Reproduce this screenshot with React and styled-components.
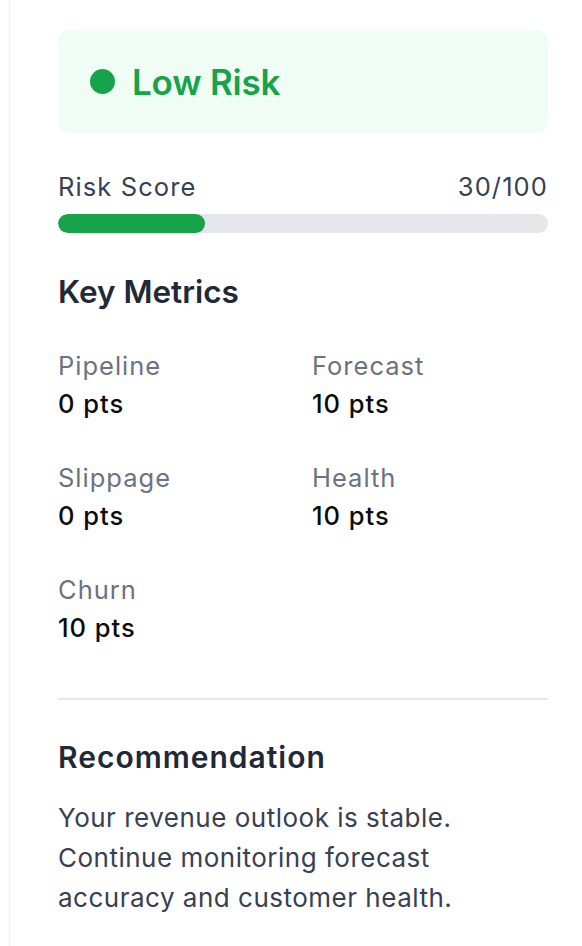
import React from 'react';
import styled, { createGlobalStyle } from 'styled-components';

const GlobalStyle = createGlobalStyle`
  html, body {
    margin: 0;
    padding: 0;
    background: #ffffff;
  }
  body {
    font-family: Inter, "Noto Sans", "Liberation Sans", sans-serif;
    -webkit-font-smoothing: antialiased;
  }
`;

const Panel = styled.aside`
  margin-left: 9px;
  min-height: 946px;
  box-sizing: border-box;
  border-left: 1px solid #f1f2f4;
  padding: 30px 34px 0 48px;
  display: flex;
  flex-direction: column;
`;

const Badge = styled.div`
  height: 103px;
  box-sizing: border-box;
  padding: 0 32px;
  display: flex;
  align-items: center;
  gap: 17px;
  background: #f0fdf4;
  border-radius: 12px;
`;

const Dot = styled.span`
  width: 25px;
  height: 25px;
  border-radius: 50%;
  background: ${({ color }) => color};
  flex-shrink: 0;
`;

const BadgeLabel = styled.span`
  font-size: 35px;
  line-height: 40px;
  font-weight: 600;
  color: ${({ color }) => color};
  letter-spacing: -0.2px;
`;

const ScoreRow = styled.div`
  margin-top: 36px;
  display: flex;
  justify-content: space-between;
  font-size: 25.5px;
  line-height: 35px;
  letter-spacing: 1.1px;
  color: #374151;
`;

const Track = styled.div`
  margin-top: 10px;
  height: 19px;
  border-radius: 10px;
  background: #e5e7eb;
  overflow: hidden;
`;

const Fill = styled.div`
  height: 100%;
  border-radius: 10px;
  background: #16a34a;
`;

const SectionTitle = styled.h3`
  margin: ${({ top }) => top}px 0 0;
  font-size: ${({ size }) => size}px;
  line-height: ${({ lh }) => lh}px;
  letter-spacing: ${({ track }) => track || 0}px;
  font-weight: 600;
  color: #1f2937;
`;

const MetricGrid = styled.div`
  margin-top: 34px;
  display: grid;
  grid-template-columns: 1fr 1fr;
  column-gap: 18px;
  row-gap: 39px;
`;

const Metric = styled.div`
  display: flex;
  flex-direction: column;
  gap: 3px;
`;

const MetricLabel = styled.span`
  font-size: 25.5px;
  line-height: 35px;
  letter-spacing: 1px;
  color: #6b7280;
`;

const MetricValue = styled.span`
  font-size: 25.5px;
  line-height: 35px;
  letter-spacing: 1px;
  font-weight: 500;
  color: #0b0b0c;
`;

const Divider = styled.hr`
  margin: 53px 0 0;
  border: none;
  height: 2px;
  background: #e6e7ea;
`;

const Body = styled.p`
  margin: 21px 0 0;
  max-width: 480px;
  font-size: 26px;
  line-height: 40px;
  letter-spacing: 0.5px;
  color: #374151;
`;

const metrics = [
  { label: 'Pipeline', value: 0 },
  { label: 'Forecast', value: 10 },
  { label: 'Slippage', value: 0 },
  { label: 'Health', value: 10 },
  { label: 'Churn', value: 10 },
];

const App = () => {
  const score = 30;
  const green = '#16a34a';

  return (
    <>
      <GlobalStyle />
      <Panel>
        <Badge>
          <Dot color={green} />
          <BadgeLabel color={green}>Low Risk</BadgeLabel>
        </Badge>

        <ScoreRow>
          <span>Risk Score</span>
          <span>{score}/100</span>
        </ScoreRow>
        <Track>
          <Fill style={{ width: `${score}%` }} />
        </Track>

        <SectionTitle top={37} size={31.5} lh={44}>Key Metrics</SectionTitle>
        <MetricGrid>
          {metrics.map((m) => (
            <Metric key={m.label}>
              <MetricLabel>{m.label}</MetricLabel>
              <MetricValue>{m.value} pts</MetricValue>
            </Metric>
          ))}
        </MetricGrid>

        <Divider />

        <SectionTitle top={37} size={30} lh={40} track={1}>Recommendation</SectionTitle>
        <Body>
          Your revenue outlook is stable. Continue monitoring forecast accuracy and customer health.
        </Body>
      </Panel>
    </>
  );
};

export default App;
